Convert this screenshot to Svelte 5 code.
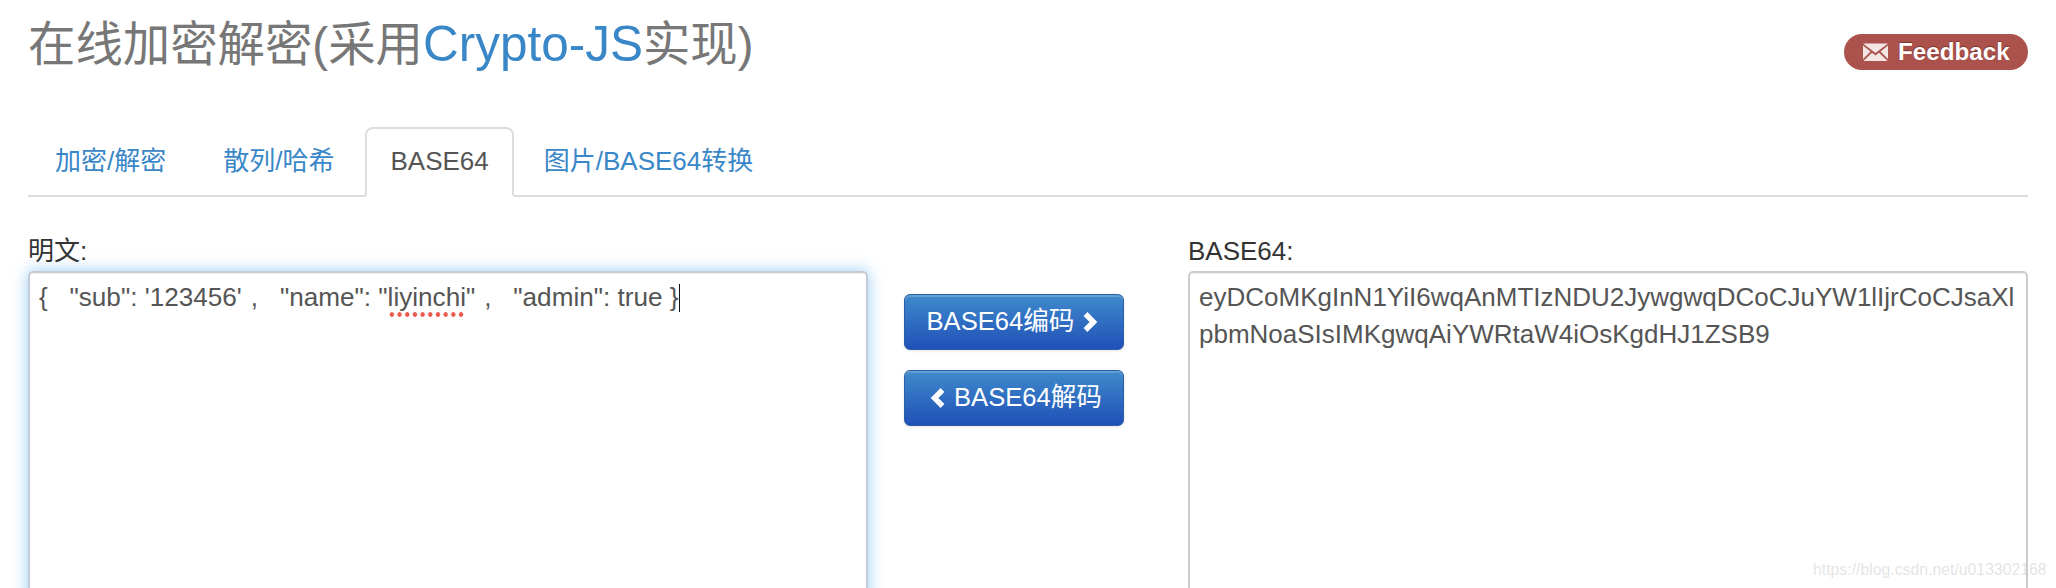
<script>
  const tabs = [
    { label: '加密/解密' },
    { label: '散列/哈希' },
    { label: 'BASE64', active: true },
    { label: '图片/BASE64转换' }
  ];
</script>

<div class="page">
  <header class="head">
    <h1>在线加密解密(采用<a href="#top">Crypto-JS</a>实现)</h1>
    <button class="feedback">
      <svg viewBox="0 0 25 20" width="25" height="20" aria-hidden="true">
        <path d="M0 1.5h25L12.5 11z" fill="#f4e6e5" />
        <path d="M0 3.5l7.5 6L0 17zM25 3.5l-7.5 6L25 17zM9 10.7l3.5 2.8 3.5-2.8 8.6 8.3H.4z" fill="#f4e6e5" />
      </svg>
      <span>Feedback</span>
    </button>
  </header>

  <ul class="tabs">
    {#each tabs as t}
      <li class:active={t.active}>{t.label}</li>
    {/each}
  </ul>

  <div class="grid">
    <section>
      <div class="label">明文:</div>
      <div class="area focus"><span>{'{   "sub": \'123456\''}</span><span class="comma">,</span><span>{'   "name": "'}</span><span class="typo">liyinchi</span><span>{'"'}</span><span class="comma">,</span><span>{'   "admin": true }'}</span><i class="caret"></i></div>
    </section>
    <div class="mid">
      <button class="btn next">BASE64编码
        <svg viewBox="0 0 17 22" width="17" height="22" aria-hidden="true"><path d="M4.5 3l8 8-8 8" fill="none" stroke="#fff" stroke-width="5.4" /></svg>
      </button>
      <button class="btn prev">
        <svg viewBox="0 0 17 22" width="17" height="22" aria-hidden="true"><path d="M12.5 3l-8 8 8 8" fill="none" stroke="#fff" stroke-width="5.4" /></svg>
        BASE64解码</button>
    </div>
    <section>
      <div class="label">BASE64:</div>
      <div class="area">eyDCoMKgInN1YiI6wqAnMTIzNDU2JywgwqDCoCJuYW1lIjrCoCJsaXlpbmNoaSIsIMKgwqAiYWRtaW4iOsKgdHJ1ZSB9</div>
    </section>
  </div>
  <div class="mark">https://blog.csdn.net/u013302168</div>
</div>

<style>
  :global(html), :global(body) {
    margin: 0;
    height: 100%;
    overflow: hidden;
    background: #fff;
  }
  .page {
    height: 588px;
    padding: 0 28px;
    box-sizing: border-box;
    overflow: hidden;
    position: relative;
    font-family: "Liberation Sans", "Noto Sans CJK SC", sans-serif;
    font-size: 26px;
    color: #555;
  }
  .head {
    display: flex;
    justify-content: space-between;
    align-items: flex-start;
    height: 127px;
  }
  h1 {
    margin: 14px 0 0;
    font-size: 47.4px;
    line-height: 60px;
    font-weight: 400;
    color: #777;
    white-space: nowrap;
  }
  h1 a {
    font-size: 49.5px;
    color: #3a87c8;
    text-decoration: none;
  }
  .feedback {
    margin-top: 34px;
    width: 184px;
    height: 36px;
    padding: 0 0 0 19px;
    display: flex;
    align-items: center;
    gap: 10px;
    border: 0;
    border-radius: 18px;
    background: #ab524c;
    color: #fff;
    font: 700 24.2px/36px "Liberation Sans", sans-serif;
    text-shadow: 0 -1px 1px #7d3530;
  }
  .tabs {
    list-style: none;
    margin: 0;
    padding: 0;
    height: 70px;
    box-sizing: border-box;
    display: flex;
    gap: 3px;
    border-bottom: 2px solid #ddd;
  }
  .tabs li {
    height: 70px;
    box-sizing: border-box;
    padding: 0 26px;
    line-height: 66px;
    color: #3a87c8;
    border: 1px solid transparent;
    white-space: nowrap;
  }
  .tabs li.active {
    color: #555;
    background: #fff;
    border: 2px solid #ddd;
    border-bottom-color: #fff;
    border-radius: 8px 8px 0 0;
    margin: 0 0 0 1px;
    padding: 0 23px;
    line-height: 64px;
  }
  .grid {
    display: grid;
    grid-template-columns: 840px 1fr 840px;
    margin-top: 40px;
  }
  .label {
    height: 34px;
    line-height: 28px;
    color: #333;
    white-space: nowrap;
  }
  .area {
    height: 400px;
    box-sizing: border-box;
    padding: 6px 9px;
    border: 2px solid #ccc;
    border-radius: 5px;
    line-height: 37px;
    color: #555;
    white-space: pre-wrap;
    word-break: break-all;
    box-shadow: inset 0 1px 1px rgba(0, 0, 0, 0.07);
  }
  .area.focus {
    font-size: 26.13px;
    border-color: #c6ccd2;
    box-shadow: inset 0 1px 1px rgba(0, 0, 0, 0.07), 0 0 16px rgba(82, 168, 236, 0.6);
  }
  .comma {
    margin-left: 9px;
  }
  .typo {
    padding-bottom: 5px;
    background: radial-gradient(circle, #ea5a4e 2px, transparent 2.6px) left bottom / 7.7px 5px repeat-x;
  }
  .caret {
    display: inline-block;
    width: 1.5px;
    height: 28px;
    background: #111;
    vertical-align: -6px;
  }
  .mid {
    display: flex;
    flex-direction: column;
    gap: 20px;
    padding: 57px 0 0 36px;
  }
  .btn {
    width: 220px;
    height: 56px;
    padding: 0;
    display: flex;
    align-items: center;
    justify-content: center;
    gap: 7px;
    border: 1px solid #2a5fa8;
    border-radius: 6px;
    background: linear-gradient(#3f8bcb, #2050b8);
    box-shadow: inset 0 2px 0 rgba(255, 255, 255, 0.18), 0 1px 3px rgba(0, 0, 0, 0.1);
    color: #fff;
    font: 25.6px/1 "Liberation Sans", "Noto Sans CJK SC", sans-serif;
    white-space: nowrap;
  }
  .btn.next {
    padding-right: 3px;
  }
  .btn.prev {
    padding-left: 4px;
  }
  .mark {
    position: absolute;
    left: 1813px;
    top: 559px;
    font-size: 15.8px;
    line-height: 22px;
    color: rgba(190, 190, 190, 0.42);
    white-space: nowrap;
  }
</style>
